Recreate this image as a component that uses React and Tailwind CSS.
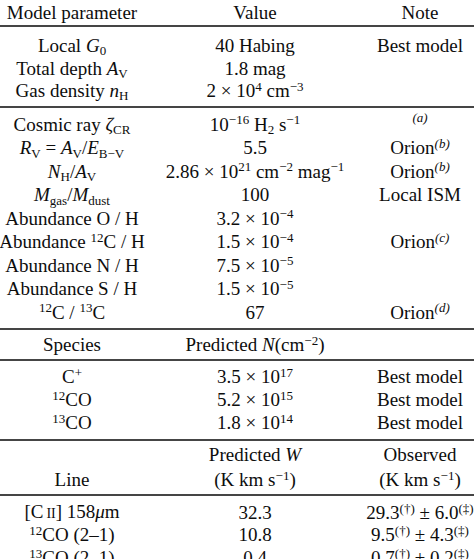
import React from "react";

const Sup = ({ children }) => (
  <sup className="text-[13px] not-italic">{children}</sup>
);
const Sub = ({ children }) => (
  <sub className="text-[13px] not-italic">{children}</sub>
);
const I = ({ children }) => <i>{children}</i>;
const M = "\u2212";

const Cell = ({ children }) => (
  <div className="flex justify-center whitespace-nowrap">{children}</div>
);

const Row = ({ a, b, c, h = "h-[23px]" }) => (
  <div className={`grid grid-cols-[144px_222px_108px] ${h} items-center`}>
    <Cell>{a}</Cell>
    <Cell>{b}</Cell>
    <Cell>{c}</Cell>
  </div>
);

const Line = () => <div className="h-[2px] bg-[#454545]" />;

const Dag = () => <Sup>(†)</Sup>;
const DDag = () => <Sup>(‡)</Sup>;

export default function App() {
  return (
    <div className="w-[474px] h-[559px] overflow-hidden bg-white text-[#0d0d0d] font-['Liberation_Serif','Times_New_Roman',serif] text-[19px] leading-[23px]">
      <div className="pt-[1px] pb-[1px]">
        <Row a="Model parameter" b="Value" c="Note" />
      </div>
      <Line />
      <div className="pt-[7px] pb-[4px]">
        <div className="flex flex-col">
          <Row
            h="h-[22.5px]"
            a={<span>Local <I>G</I><Sub>0</Sub></span>}
            b="40 Habing"
            c="Best model"
          />
          <Row
            h="h-[22.5px]"
            a={<span>Total depth <I>A</I><Sub>V</Sub></span>}
            b="1.8 mag"
          />
          <Row
            h="h-[22.5px]"
            a={<span>Gas density <I>n</I><Sub>H</Sub></span>}
            b={<span>2 × 10<Sup>4</Sup> cm<Sup>{M}3</Sup></span>}
          />
        </div>
      </div>
      <Line />
      <div className="pt-[5px] pb-[4px]">
        <Row
          h="h-[23.5px]"
          a={<span>Cosmic ray <I>ζ</I><Sub>CR</Sub></span>}
          b={<span>10<Sup>{M}16</Sup> H<Sub>2</Sub> s<Sup>{M}1</Sup></span>}
          c={<span className="relative -top-[7px] text-[13px] italic">(a)</span>}
        />
        <Row
          h="h-[23.5px]"
          a={<span><I>R</I><Sub>V</Sub> = <I>A</I><Sub>V</Sub>/<I>E</I><Sub>B{M}V</Sub></span>}
          b="5.5"
          c={<span>Orion<Sup><i>(b)</i></Sup></span>}
        />
        <Row
          h="h-[23.5px]"
          a={<span><I>N</I><Sub>H</Sub>/<I>A</I><Sub>V</Sub></span>}
          b={<span>2.86 × 10<Sup>21</Sup> cm<Sup>{M}2</Sup> mag<Sup>{M}1</Sup></span>}
          c={<span>Orion<Sup><i>(b)</i></Sup></span>}
        />
        <Row
          h="h-[23.5px]"
          a={<span><I>M</I><Sub>gas</Sub>/<I>M</I><Sub>dust</Sub></span>}
          b="100"
          c="Local ISM"
        />
        <Row
          h="h-[23.5px]"
          a="Abundance O / H"
          b={<span>3.2 × 10<Sup>{M}4</Sup></span>}
        />
        <Row
          h="h-[23.5px]"
          a={<span>Abundance <Sup>12</Sup>C / H</span>}
          b={<span>1.5 × 10<Sup>{M}4</Sup></span>}
          c={<span>Orion<Sup><i>(c)</i></Sup></span>}
        />
        <Row
          h="h-[23.5px]"
          a="Abundance N / H"
          b={<span>7.5 × 10<Sup>{M}5</Sup></span>}
        />
        <Row
          h="h-[23.5px]"
          a="Abundance S / H"
          b={<span>1.5 × 10<Sup>{M}5</Sup></span>}
        />
        <Row
          h="h-[23.5px]"
          a={<span><Sup>12</Sup>C / <Sup>13</Sup>C</span>}
          b="67"
          c={<span>Orion<Sup><i>(d)</i></Sup></span>}
        />
      </div>
      <Line />
      <div className="pt-[3px] pb-[3px]">
        <Row
          a="Species"
          b={<span>Predicted <I>N</I>(cm<Sup>{M}2</Sup>)</span>}
        />
      </div>
      <Line />
      <div className="pt-[4px] pb-[5px]">
        <Row a={<span>C<Sup>+</Sup></span>} b={<span>3.5 × 10<Sup>17</Sup></span>} c="Best model" />
        <Row a={<span><Sup>12</Sup>CO</span>} b={<span>5.2 × 10<Sup>15</Sup></span>} c="Best model" />
        <Row a={<span><Sup>13</Sup>CO</span>} b={<span>1.8 × 10<Sup>14</Sup></span>} c="Best model" />
      </div>
      <Line />
      <div className="pt-[1px] pb-[2px]">
        <Row h="h-[25px]" b={<span>Predicted <I>W</I></span>} c="Observed" />
        <Row
          h="h-[25px]"
          a="Line"
          b={<span>(K km s<Sup>{M}1</Sup>)</span>}
          c={<span>(K km s<Sup>{M}1</Sup>)</span>}
        />
      </div>
      <Line />
      <div className="pt-[4px]">
        <Row
          a={<span>[C<span className="text-[14px] ml-[3px]">II</span>] 158<I>μ</I>m</span>}
          b="32.3"
          c={<span>29.3<Dag /> ± 6.0<DDag /></span>}
        />
        <Row
          a={<span><Sup>12</Sup>CO (2–1)</span>}
          b="10.8"
          c={<span>9.5<Dag /> ± 4.3<DDag /></span>}
        />
        <Row
          a={<span><Sup>13</Sup>CO (2–1)</span>}
          b="0.4"
          c={<span>0.7<Dag /> ± 0.2<DDag /></span>}
        />
      </div>
    </div>
  );
}
